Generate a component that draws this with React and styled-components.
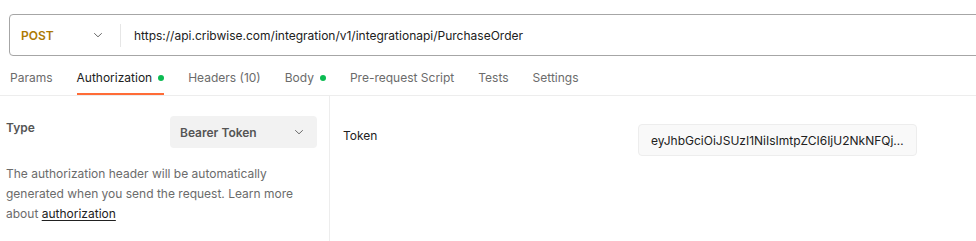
import React from "react";
import styled, { createGlobalStyle } from "styled-components";

const Global = createGlobalStyle`
  html, body { margin: 0; padding: 0; background: #ffffff; overflow: hidden; }
  body { font-family: Inter, "Noto Sans", "Liberation Sans", sans-serif; color: #212121; }
  * { box-sizing: border-box; }
`;

const Page = styled.div`
  width: 976px;
  height: 241px;
  background: #fff;
  overflow: hidden;
  padding-top: 14px;
`;

const UrlBar = styled.div`
  display: flex;
  align-items: center;
  margin-left: 9px;
  margin-right: -20px;
  height: 42px;
  border: 1px solid #a6a6a6;
  border-radius: 4px;
`;

const Method = styled.div`
  display: flex;
  align-items: center;
  justify-content: space-between;
  width: 110px;
  padding: 0 17px 0 11px;
  font-size: 12px;
  font-weight: 600;
  color: #ad7a03;
  height: 100%;
`;

const Separator = styled.div`
  width: 1px;
  height: 23px;
  background: #e6e6e6;
`;

const UrlText = styled.div`
  padding-left: 13px;
  font-size: 12px;
  color: #212121;
`;

const TabBar = styled.div`
  display: flex;
  gap: 24px;
  padding-left: 10px;
  height: 40px;
  border-bottom: 1px solid #ededed;
`;

const Tab = styled.div`
  display: flex;
  align-items: center;
  gap: 6px;
  padding-top: 12px;
  height: 39px;
  font-size: 12px;
  line-height: 18px;
  color: ${(p) => (p.$active ? "#212121" : "#6b6b6b")};
  border-bottom: 2px solid ${(p) => (p.$active ? "#ff6c37" : "transparent")};
  padding-bottom: 5px;
`;

const Dot = styled.span`
  width: 6px;
  height: 6px;
  border-radius: 50%;
  background: #0cbb52;
`;

const Body = styled.div`
  display: flex;
  height: 145px;
`;

const LeftPanel = styled.div`
  width: 330px;
  border-right: 1px solid #ededed;
  padding: 20px 12px 0 6px;
`;

const TypeRow = styled.div`
  display: flex;
  justify-content: space-between;
  align-items: flex-start;
`;

const Label = styled.div`
  font-size: 12px;
  line-height: 16px;
  font-weight: ${(p) => (p.$bold ? 600 : 400)};
  color: ${(p) => (p.$bold ? "#555555" : "#212121")};
  padding-top: 4px;
`;

const Select = styled.div`
  display: flex;
  align-items: center;
  justify-content: space-between;
  width: 147px;
  height: 32px;
  padding: 0 13px 0 10px;
  border-radius: 4px;
  background: #f2f2f2;
  font-size: 12px;
  font-weight: 600;
  color: #555555;
`;

const Description = styled.p`
  margin: 16px 0 0;
  font-size: 12px;
  line-height: 20px;
  color: #6b6b6b;
`;

const Link = styled.a`
  color: #212121;
  text-decoration: underline;
  text-underline-offset: 2px;
  text-decoration-thickness: 1px;
`;

const RightPanel = styled.div`
  flex: 1;
  display: grid;
  grid-template-columns: 1fr 279px;
  align-items: start;
  padding: 28px 59px 0 13px;
`;

const TokenInput = styled.div`
  height: 32px;
  display: flex;
  align-items: center;
  padding: 0 10px 0 12px;
  background: #f9f9f9;
  border: 1px solid #ededed;
  border-radius: 4px;
  font-size: 12px;
  color: #212121;
  overflow: hidden;
  white-space: nowrap;
`;

const TokenText = styled.span`
  overflow: hidden;
  text-overflow: ellipsis;
  flex: 1;
  min-width: 0;
`;

const Chevron = ({ color = "#6b6b6b" }) => (
  <svg width="10" height="10" viewBox="0 0 10 10" fill="none">
    <path d="M1.5 3.5 L5 6.8 L8.5 3.5" stroke={color} strokeWidth="1" strokeLinecap="round" strokeLinejoin="round" />
  </svg>
);

const tabs = [
  { label: "Params" },
  { label: "Authorization", active: true, dot: true },
  { label: "Headers (10)" },
  { label: "Body", dot: true },
  { label: "Pre-request Script" },
  { label: "Tests" },
  { label: "Settings" },
];

export default function App() {
  return (
    <Page>
      <Global />
      <UrlBar>
        <Method>
          POST
          <Chevron />
        </Method>
        <Separator />
        <UrlText>https://api.cribwise.com/integration/v1/integrationapi/PurchaseOrder</UrlText>
      </UrlBar>
      <TabBar>
        {tabs.map((t) => (
          <Tab key={t.label} $active={t.active}>
            {t.label}
            {t.dot && <Dot />}
          </Tab>
        ))}
      </TabBar>
      <Body>
        <LeftPanel>
          <TypeRow>
            <Label $bold>Type</Label>
            <Select>
              Bearer Token
              <Chevron />
            </Select>
          </TypeRow>
          <Description>
            The authorization header will be automatically generated when you send the request. Learn more
            about <Link>authorization</Link>
          </Description>
        </LeftPanel>
        <RightPanel>
          <Label>Token</Label>
          <TokenInput>
            <TokenText>eyJhbGciOiJSUzI1NiIsImtpZCI6IjU2NkNFQjRFRkE1MjE2</TokenText>
          </TokenInput>
        </RightPanel>
      </Body>
    </Page>
  );
}
